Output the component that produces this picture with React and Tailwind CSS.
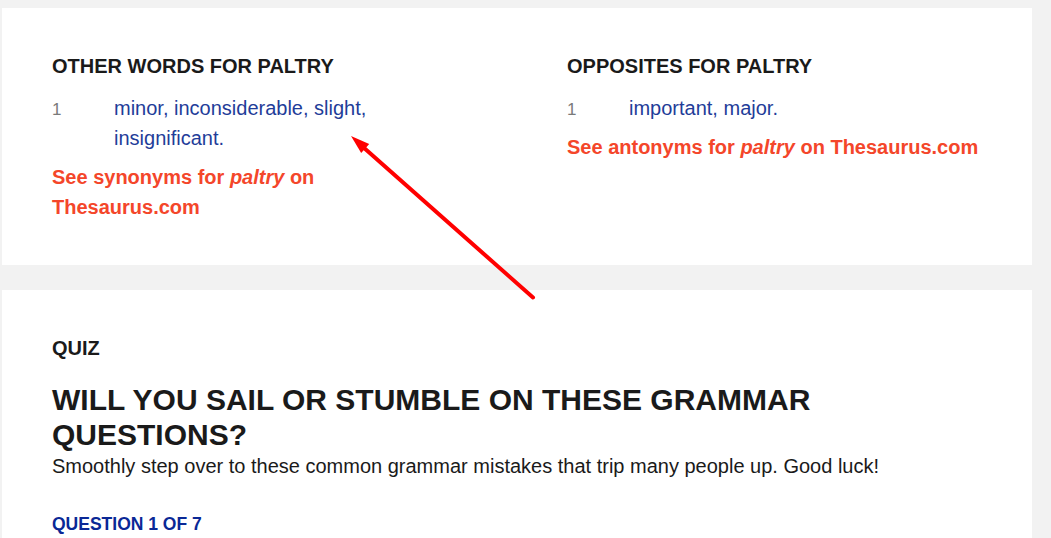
import React from 'react'

const SenseList = ({ words, link }) => {
  return (
    <div>
      <div className="mt-[15px] flex items-baseline">
        <span className="w-[62px] shrink-0 text-[17px] text-[#7a7a7a]">1</span>
        <p className="text-[20px] leading-[30px] text-[#1f3d99]">{words}</p>
      </div>
      <a href="#" className="mt-[9px] block text-[20px] leading-[30px] font-bold text-[#f4462a]">
        See {link.kind} for <i>paltry</i> on Thesaurus.com
      </a>
    </div>
  )
}

const App = () => {
  return (
    <div className="relative h-[538px] w-full overflow-hidden bg-[#f2f2f2] pt-[8px] font-['Liberation_Sans',Arial,sans-serif] text-[#1a1a1a]">
      <section className="ml-[2px] w-[1030px] bg-white pl-[50px] pt-[46px] pb-[43px]">
        <div className="grid grid-cols-[515px_1fr]">
          <div className="max-w-[340px]">
            <h2 className="text-[20px] leading-[24px] font-bold">OTHER WORDS FOR PALTRY</h2>
            <SenseList words="minor, inconsiderable, slight, insignificant." link={{ kind: 'synonyms' }} />
          </div>
          <div>
            <h2 className="text-[20px] leading-[24px] font-bold">OPPOSITES FOR PALTRY</h2>
            <SenseList words="important, major." link={{ kind: 'antonyms' }} />
          </div>
        </div>
      </section>

      <section className="ml-[2px] mt-[25px] w-[1030px] bg-white pl-[50px] pr-[50px] pt-[46px] pb-[60px]">
        <h3 className="text-[20px] leading-[24px] font-bold">QUIZ</h3>
        <h2 className="mt-[22px] text-[30px] leading-[35px] font-bold">
          WILL YOU SAIL OR STUMBLE ON THESE GRAMMAR QUESTIONS?
        </h2>
        <p className="text-[20px] leading-[28px]">
          Smoothly step over to these common grammar mistakes that trip many people up. Good luck!
        </p>
        <p className="mt-[34px] text-[17.5px] leading-[21px] font-bold text-[#0a2896]">QUESTION 1 OF 7</p>
      </section>

      {/* annotation arrow */}
      <svg className="pointer-events-none absolute left-0 top-0" width="1051" height="538">
        <line x1="533" y1="297.5" x2="363" y2="147" stroke="#ff0000" strokeWidth="4" strokeLinecap="round" />
        <polygon points="351,136 361.2,153.1 369.2,144.1" fill="#ff0000" />
      </svg>
    </div>
  )
}

export default App
